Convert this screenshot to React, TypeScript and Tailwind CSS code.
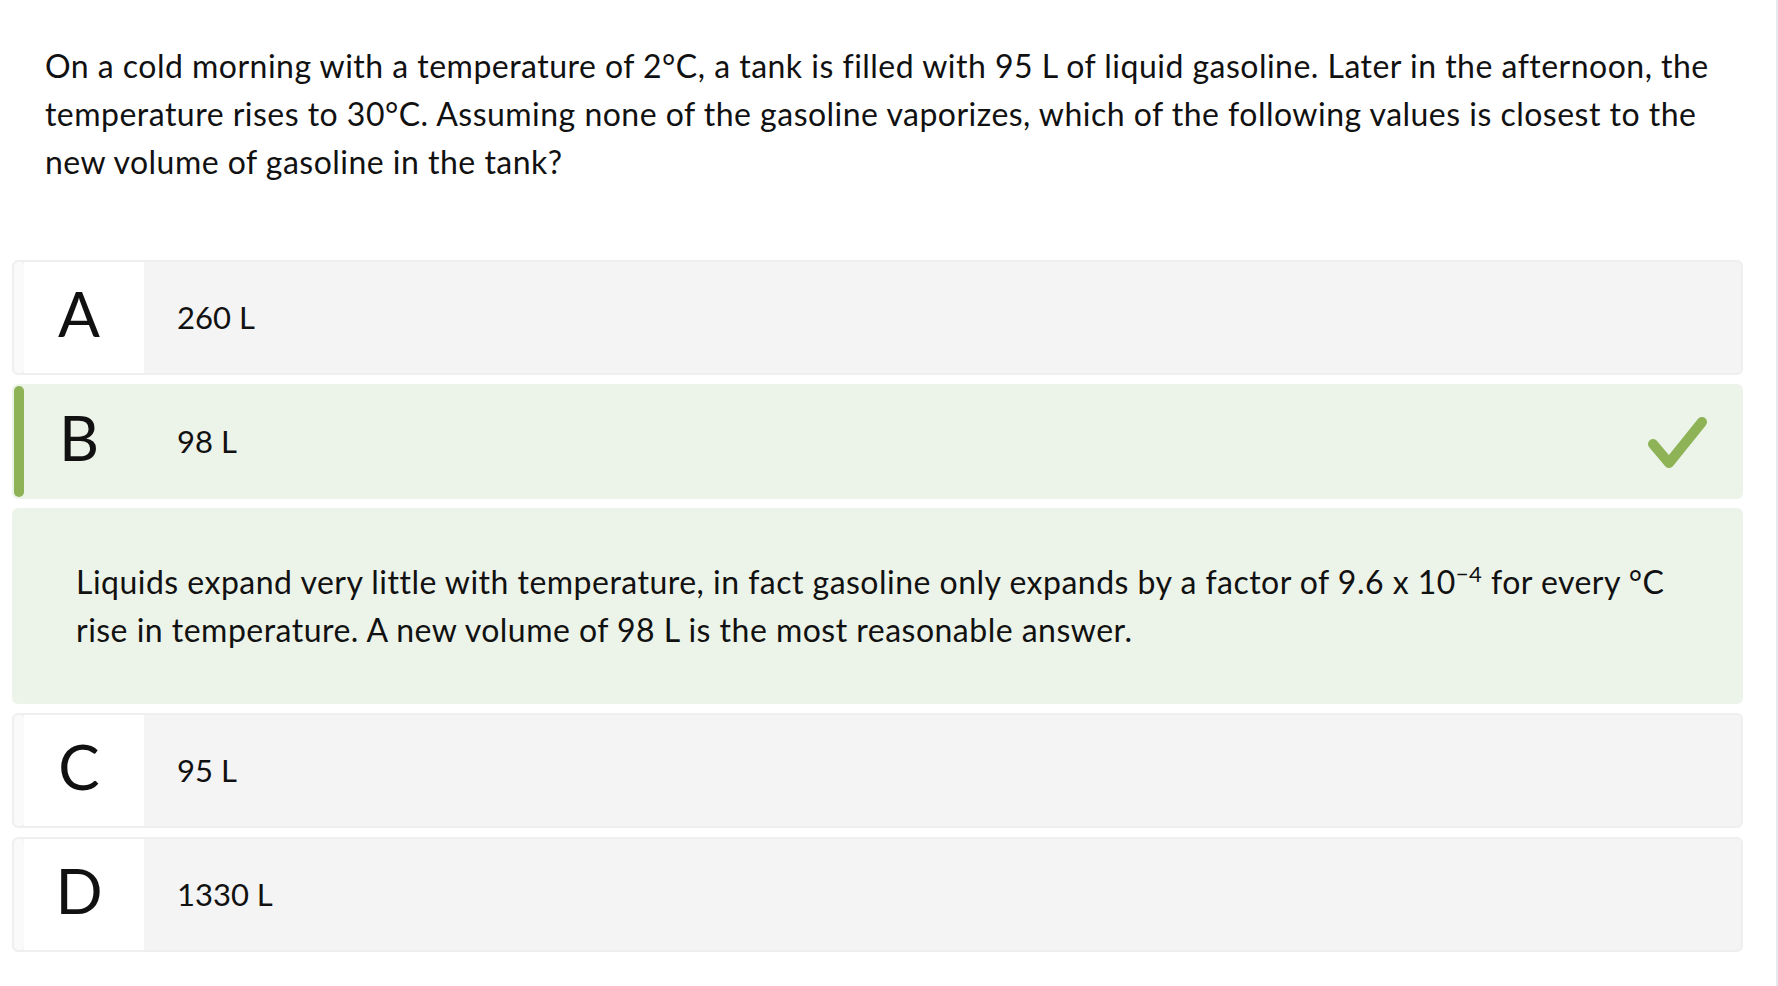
const font = { fontFamily: "Lato, 'Open Sans', sans-serif" };

type Opt = { letter: string; text: string; correct?: boolean };

const options: Opt[] = [
  { letter: "A", text: "260 L" },
  { letter: "B", text: "98 L", correct: true },
  { letter: "C", text: "95 L" },
  { letter: "D", text: "1330 L" },
];

const Check = () => (
  <svg width="64" height="56" viewBox="0 0 64 56" fill="none">
    <path
      d="M7 30 L23 49 L56 8"
      stroke="#8db356"
      strokeWidth="10"
      strokeLinecap="round"
      strokeLinejoin="round"
    />
  </svg>
);

const Option = ({ opt }: { opt: Opt }) => {
  if (opt.correct) {
    return (
      <div className="flex items-stretch h-[115px] rounded-md border-2 border-[#ecf3e8] bg-[#ecf3e8]">
        <div className="w-[10px] rounded-full bg-[#8db356]" />
        <div className="w-[120px] flex items-center justify-center pr-[10px] pb-[10px] text-[62px] leading-none text-[#111]">
          {opt.letter}
        </div>
        <div className="flex-1 flex items-center pl-[33px] text-[31px] text-[#111]">{opt.text}</div>
        <div className="flex items-center pr-[31px]">
          <Check />
        </div>
      </div>
    );
  }
  return (
    <div className="flex items-stretch h-[115px] rounded-md border-2 border-[#efefef] bg-[#f4f4f4] overflow-hidden">
      <div className="w-[10px] rounded-full bg-[#fafafa]" />
      <div className="w-[120px] bg-white flex items-center justify-center pr-[10px] pb-[10px] text-[62px] leading-none text-[#111]">
        {opt.letter}
      </div>
      <div className="flex-1 flex items-center pl-[33px] text-[31px] text-[#111]">{opt.text}</div>
    </div>
  );
};

export default function App() {
  return (
    <div className="flex min-h-screen bg-white" style={font}>
      <div className="w-[1731px] ml-[12px]">
        <p className="pt-[42px] pl-[33px] pr-[20px] text-[32px] tracking-[0.015em] leading-[48px] text-[#111]">
          On a cold morning with a temperature of 2°C, a tank is filled with 95 L of liquid gasoline. Later in the
          afternoon, the temperature rises to 30°C. Assuming none of the gasoline vaporizes, which of the following
          values is closest to the new volume of gasoline in the tank?
        </p>

        <div className="mt-[74px] flex flex-col gap-[9px]">
          <Option opt={options[0]} />
          <Option opt={options[1]} />
          <div className="h-[196px] rounded-md bg-[#ecf3e8] pt-[50px] pl-[64px] pr-[60px] text-[32px] tracking-[0.015em] leading-[48px] text-[#111]">
            Liquids expand very little with temperature, in fact gasoline only expands by a factor of 9.6 x 10
            <sup className="text-[22px] leading-none -top-[12px]">−4</sup> for every °C rise in temperature. A new
            volume of 98 L is the most reasonable answer.
          </div>
          <Option opt={options[2]} />
          <Option opt={options[3]} />
        </div>
      </div>
      <div className="flex-1" />
      <div className="w-[2px] bg-[#e6e9ed]" />
    </div>
  );
}
